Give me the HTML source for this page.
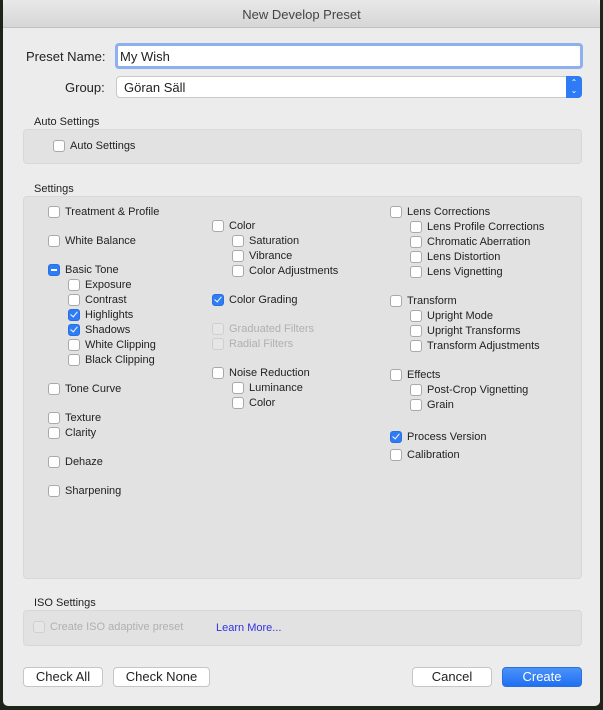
<!DOCTYPE html><html><head><meta charset="utf-8"><style>
*{box-sizing:border-box}body{margin:0;width:603px;height:710px;background:#1e2418;font-family:"Liberation Sans",sans-serif;font-size:11px;color:#222;position:relative;overflow:hidden}
.win{position:absolute;left:3px;top:0;width:597px;height:706px;background:#ececec;border-radius:0 0 5px 5px}
.title{position:absolute;left:3px;top:0;width:597px;height:28px;background:linear-gradient(#e8e8e8,#d6d6d6);border-bottom:1px solid #c0c0c0;text-align:center;line-height:29px;font-size:13px;color:#444;border-radius:5px 5px 0 0}
.a{position:absolute;white-space:nowrap}
.lbl{font-size:13px;color:#222}
.box{position:absolute;left:23px;width:559px;background:#e2e2e2;border:1px solid #d8d8d8;border-radius:4px}
.cb{position:absolute;width:12px;height:12px;border:1px solid #a9a9a9;border-radius:3px;background:#fff}
.cb.on{background:#2e7cf6;border-color:#2a6fe0}
.cb.on:after{content:"";position:absolute;left:3px;top:0px;width:3px;height:6px;border:solid #fff;border-width:0 1.6px 1.6px 0;transform:rotate(40deg)}
.cb.mix{background:#2e7cf6;border-color:#2a6fe0}
.cb.mix:after{content:"";position:absolute;left:2px;top:4px;width:6px;height:2px;background:#fff}
.cb.dis{background:#e6e6e6;border-color:#cfcfcf}
.t{position:absolute;white-space:nowrap;font-size:11px;line-height:13px}
.dis2{color:#b0b0b0}
.btn{position:absolute;height:20px;background:#fff;border:1px solid #c6c6c6;border-radius:4px;text-align:center;line-height:18px;font-size:13px;color:#222}
</style></head><body>
<div class="win"></div><div class="title">New Develop Preset</div>
<div class="a lbl" style="left:26px;top:49px">Preset Name:</div>
<div class="a" style="left:115px;top:43px;width:468px;height:26px;border:3px solid #8fb0ee;border-radius:4px;background:#fff"><div style="position:absolute;left:2px;top:3px;font-size:13px">My Wish</div></div>
<div class="a lbl" style="left:65px;top:80px">Group:</div>
<div class="a" style="left:116px;top:76px;width:466px;height:22px;border:1px solid #c8c8c8;border-radius:4px;background:#fff"><div style="position:absolute;left:7px;top:3px;font-size:13px">Göran Säll</div><div style="position:absolute;right:-1px;top:-1px;width:16px;height:22px;background:#2f7bf5;border-radius:0 4px 4px 0;color:#fff;font-size:8px;line-height:8px;text-align:center;padding-top:3px">⌃<br>⌄</div></div>
<div class="a" style="left:34px;top:116px">Auto Settings</div>
<div class="box" style="top:129px;height:35px"></div>
<div class="cb" style="left:53px;top:140px"></div><div class="t" style="left:70px;top:140px">Auto Settings</div>
<div class="a" style="left:34px;top:183px">Settings</div>
<div class="box" style="top:196px;height:383px"></div>
<div class="a" style="left:34px;top:597px">ISO Settings</div>
<div class="box" style="top:610px;height:36px"></div>
<div class="cb dis" style="left:33px;top:621px"></div><div class="t dis2" style="left:50px;top:621px">Create ISO adaptive preset</div>
<div class="t" style="left:216px;top:622px;color:#3333dd">Learn More...</div>
<div class="btn" style="left:23px;top:667px;width:80px">Check All</div>
<div class="btn" style="left:113px;top:667px;width:97px">Check None</div>
<div class="btn" style="left:412px;top:667px;width:80px">Cancel</div>
<div class="btn" style="left:502px;top:667px;width:80px;background:linear-gradient(#4a93fa,#1f6ff2);border-color:#2a6fe0;color:#fff">Create</div>
<div id="items"></div>
<script>
var L=[
[48,212,"Treatment & Profile"],[48,241,"White Balance"],[48,270,"Basic Tone","mix"],[68,285,"Exposure"],[68,300,"Contrast"],[68,315,"Highlights","on"],[68,330,"Shadows","on"],[68,345,"White Clipping"],[68,360,"Black Clipping"],[48,389,"Tone Curve"],[48,418,"Texture"],[48,433,"Clarity"],[48,462,"Dehaze"],[48,491,"Sharpening"],
[212,226,"Color"],[232,241,"Saturation"],[232,256,"Vibrance"],[232,271,"Color Adjustments"],[212,300,"Color Grading","on"],[212,329,"Graduated Filters","dis"],[212,344,"Radial Filters","dis"],[212,373,"Noise Reduction"],[232,388,"Luminance"],[232,403,"Color"],
[390,212,"Lens Corrections"],[410,227,"Lens Profile Corrections"],[410,242,"Chromatic Aberration"],[410,257,"Lens Distortion"],[410,272,"Lens Vignetting"],[390,301,"Transform"],[410,316,"Upright Mode"],[410,331,"Upright Transforms"],[410,346,"Transform Adjustments"],[390,375,"Effects"],[410,390,"Post-Crop Vignetting"],[410,405,"Grain"],[390,437,"Process Version","on"],[390,455,"Calibration"]];
var h="";L.forEach(function(r){var c=r[3]||"";h+='<div class="cb '+c+'" style="left:'+r[0]+'px;top:'+(r[1]-6)+'px"></div><div class="t'+(c=="dis"?" dis2":"")+'" style="left:'+(r[0]+17)+'px;top:'+(r[1]-6)+'px">'+r[2].replace("&","&amp;")+'</div>'});
document.getElementById("items").innerHTML=h;
</script>
</body></html>
